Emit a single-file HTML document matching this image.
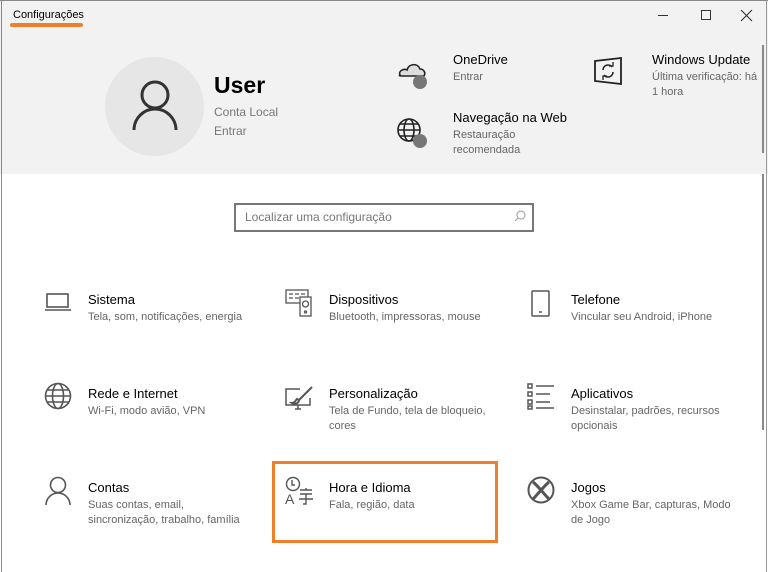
<!DOCTYPE html>
<html><head><meta charset="utf-8"><style>
*{margin:0;padding:0;box-sizing:border-box}
body{width:768px;height:572px;overflow:hidden;background:#fff;font-family:"Liberation Sans",sans-serif;position:relative;color:#000}
.a{position:absolute}
.hdr{left:0;top:0;width:768px;height:174px;background:#f2f2f2}
.t{font-size:13px;color:#000;white-space:nowrap}
.s{font-size:11px;color:#666;line-height:15px}
svg{position:absolute;overflow:visible}
</style></head><body>
<div class="a hdr"></div>
<div class="a" style="left:0;top:0;width:768px;height:1px;background:#888"></div>
<div class="a" style="left:1px;top:0;width:1px;height:572px;background:#888"></div>
<div class="a" style="left:766px;top:0;width:1px;height:572px;background:#999"></div>
<div class="a" style="left:762px;top:45px;width:2px;height:108px;background:#888"></div>
<div class="a" style="left:762px;top:174px;width:2px;height:256px;background:#888"></div>
<div class="a" style="left:13px;top:9px;font-size:11px">Configurações</div>
<div class="a" style="left:10px;top:23px;width:73px;height:4px;border-radius:2px;background:#f07f2a"></div>
<!-- window controls -->
<div class="a" style="left:658px;top:15px;width:10px;height:1px;background:#333"></div>
<div class="a" style="left:701px;top:10px;width:10px;height:10px;border:1px solid #333"></div>
<svg style="left:741px;top:10px" width="11" height="11"><path d="M0 0L11 11M11 0L0 11" stroke="#333" stroke-width="1.1"/></svg>
<!-- avatar -->
<div class="a" style="left:105px;top:57px;width:99px;height:99px;border-radius:50%;background:#e6e6e6"></div>
<svg style="left:132px;top:80px" width="46" height="52"><circle cx="23" cy="15" r="13" fill="none" stroke="#333" stroke-width="3"/><path d="M2 50A21 21 0 0 1 44 50" fill="none" stroke="#333" stroke-width="3"/></svg>
<div class="a" style="left:214px;top:72px;font-size:23px;font-weight:bold">User</div>
<div class="a s" style="left:214px;top:105px;font-size:12px;color:#777">Conta Local</div>
<div class="a s" style="left:214px;top:124px;font-size:12px;color:#777">Entrar</div>
<!-- onedrive -->
<svg style="left:396px;top:60px" width="34" height="30"><path d="M4 15C2 11 8 8 11 10C13 3 22 3 24 9C28 9 30 13 28 16L6 16C3 16 3 15 4 15Z" fill="#ddd" stroke="#222" stroke-width="1.6"/><circle cx="24" cy="22" r="7" fill="#777"/></svg>
<div class="a t" style="left:453px;top:52px">OneDrive</div>
<div class="a s" style="left:453px;top:70px">Entrar</div>
<!-- globe -->
<svg style="left:396px;top:117px" width="34" height="34"><circle cx="13" cy="13" r="11" fill="none" stroke="#222" stroke-width="1.6"/><ellipse cx="13" cy="13" rx="5" ry="11" fill="none" stroke="#222" stroke-width="1.6"/><path d="M2 13H24M4 7H22M4 19H22" stroke="#222" stroke-width="1.4"/><circle cx="24" cy="24" r="7" fill="#777"/></svg>
<div class="a t" style="left:453px;top:110px">Navegação na Web</div>
<div class="a s" style="left:453px;top:128px">Restauração<br>recomendada</div>
<!-- windows update -->
<svg style="left:594px;top:57px" width="30" height="28"><path d="M1 4L27 1V27L1 24Z" fill="none" stroke="#222" stroke-width="1.8"/><path d="M9 13A5 5 0 0 1 18 10M19 15A5 5 0 0 1 10 18" fill="none" stroke="#222" stroke-width="1.6"/><path d="M15 9H19V5M13 19H9V23" fill="none" stroke="#222" stroke-width="1.3"/></svg>
<div class="a t" style="left:652px;top:52px">Windows Update</div>
<div class="a s" style="left:652px;top:70px">Última verificação: há<br>1 hora</div>
<!-- search -->
<div class="a" style="left:234px;top:203px;width:300px;height:29px;border:2px solid #777;background:#fff"></div>
<div class="a" style="left:245px;top:210px;font-size:12px;color:#777">Localizar uma configuração</div>
<svg style="left:514px;top:210px" width="12" height="12"><circle cx="7" cy="5" r="4" fill="none" stroke="#999" stroke-width="1"/><path d="M4 8L1 11" stroke="#999"/></svg>
<!-- grid -->
<svg style="left:44px;top:292px" width="28" height="22" stroke="#555" fill="none" stroke-width="1.6"><rect x="3" y="2" width="21" height="13"/><path d="M1 18H27"/></svg>
<div class="a t" style="left:88px;top:292px">Sistema</div>
<div class="a s" style="left:88px;top:310px">Tela, som, notificações, energia</div>

<svg style="left:285px;top:289px" width="30" height="28" stroke="#555" fill="none" stroke-width="1.3"><rect x="1" y="1" width="22" height="13"/><path d="M4 5H8M10 5H14M16 5H20M4 9H8M10 9H14"/><rect x="15" y="8" width="11" height="19" fill="#fff"/><circle cx="20.5" cy="15" r="3"/><circle cx="20.5" cy="23" r="1"/></svg>
<div class="a t" style="left:329px;top:292px">Dispositivos</div>
<div class="a s" style="left:329px;top:310px">Bluetooth, impressoras, mouse</div>

<svg style="left:531px;top:290px" width="20" height="28" stroke="#555" fill="none" stroke-width="1.5"><rect x="1" y="1" width="17" height="25" rx="1"/><path d="M8 22H11"/></svg>
<div class="a t" style="left:571px;top:292px">Telefone</div>
<div class="a s" style="left:571px;top:310px">Vincular seu Android, iPhone</div>

<svg style="left:44px;top:382px" width="28" height="28" stroke="#555" fill="none" stroke-width="1.6"><circle cx="14" cy="14" r="12.5"/><ellipse cx="14" cy="14" rx="5.5" ry="12.5"/><path d="M1.5 14H26.5M3.5 8H24.5M3.5 20H24.5"/></svg>
<div class="a t" style="left:88px;top:386px">Rede e Internet</div>
<div class="a s" style="left:88px;top:404px">Wi-Fi, modo avião, VPN</div>

<svg style="left:285px;top:386px" width="30" height="28" stroke="#555" fill="none" stroke-width="1.5"><path d="M15 3H1V19H25V12"/><path d="M10 23H16M13 19V23"/><path d="M27 1L14 14M12 13C10 15 10 17 7 17C10 19 14 17 14 14Z" stroke-width="2"/></svg>
<div class="a t" style="left:329px;top:386px">Personalização</div>
<div class="a s" style="left:329px;top:404px">Tela de Fundo, tela de bloqueio,<br>cores</div>

<svg style="left:527px;top:383px" width="28" height="28" stroke="#555" fill="none" stroke-width="1.5"><rect x="1" y="1" width="4" height="4"/><rect x="1" y="9" width="4" height="4"/><rect x="1" y="17" width="4" height="4"/><rect x="1" y="23" width="4" height="3"/><path d="M9 3H27M9 11H23M9 19H23M9 25H27"/></svg>
<div class="a t" style="left:571px;top:386px">Aplicativos</div>
<div class="a s" style="left:571px;top:404px">Desinstalar, padrões, recursos<br>opcionais</div>

<svg style="left:45px;top:476px" width="28" height="30" stroke="#555" fill="none" stroke-width="1.6"><circle cx="13" cy="9" r="7.5"/><path d="M1 29A12 12 0 0 1 25 29"/></svg>
<div class="a t" style="left:88px;top:480px">Contas</div>
<div class="a s" style="left:88px;top:498px">Suas contas, email,<br>sincronização, trabalho, família</div>

<div class="a" style="left:272px;top:461px;width:226px;height:82px;border:3px solid #f07f2a"></div>
<svg style="left:285px;top:476px" width="30" height="30" stroke="#555" fill="none" stroke-width="1.4"><circle cx="8" cy="8" r="6.5"/><path d="M7 4V9H10"/><text x="0" y="28" font-size="14" fill="#555" stroke="none" font-family="Liberation Sans">A</text><path d="M15 14H27M21 12V14M15 18H27M21 18V28H18M14 23H28"/></svg>
<div class="a t" style="left:329px;top:480px">Hora e Idioma</div>
<div class="a s" style="left:329px;top:498px">Fala, região, data</div>

<svg style="left:527px;top:476px" width="28" height="28" stroke="#555" fill="none" stroke-width="2"><circle cx="14" cy="14" r="12.5"/><path d="M6 6C10 9 18 19 22 23M22 6C18 9 10 19 6 23" stroke-width="3"/></svg>
<div class="a t" style="left:571px;top:480px">Jogos</div>
<div class="a s" style="left:571px;top:498px">Xbox Game Bar, capturas, Modo<br>de Jogo</div>
</body></html>
